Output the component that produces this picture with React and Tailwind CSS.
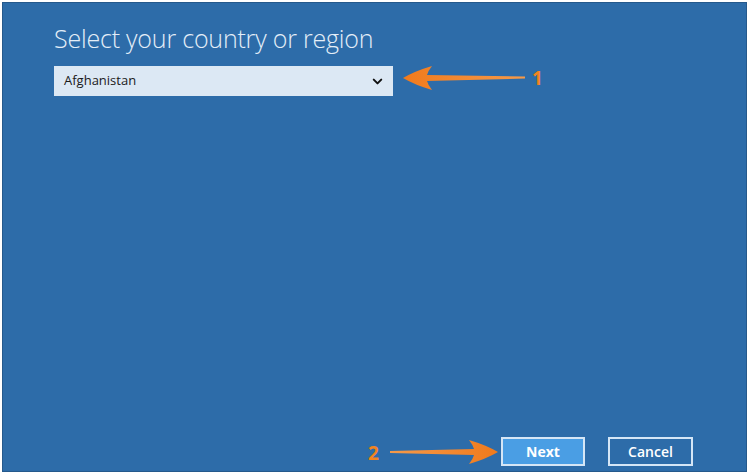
import { ChevronDown } from "lucide-react";

// ── Annotation arrows ────────────────────────────────────────────────────────
const ArrowLeft = () => (
  <svg width="126" height="26" viewBox="0 0 126 26" className="absolute left-[401px] top-[65px]">
    <defs>
      <linearGradient id="a1" x1="0" x2="1" y1="0" y2="0">
        <stop offset="0" stopColor="#f07a1c" />
        <stop offset="1" stopColor="#f59a4a" />
      </linearGradient>
    </defs>
    <path d="M2 13 Q14 6 31 1 Q27 6 26 10 L124 11.5 L124 13.5 L26 16 Q27 20 31 25 Q14 20 2 13 Z" fill="url(#a1)" />
  </svg>
);

const ArrowRight = () => (
  <svg width="112" height="26" viewBox="0 0 112 26" className="absolute left-[388px] top-[439px]">
    <defs>
      <linearGradient id="a2" x1="0" x2="1" y1="0" y2="0">
        <stop offset="0" stopColor="#f59a4a" />
        <stop offset="1" stopColor="#f07a1c" />
      </linearGradient>
    </defs>
    <path d="M110 13 Q98 6 81 1 Q85 6 86 10 L2 12 L2 14 L86 16 Q85 20 81 25 Q98 20 110 13 Z" fill="url(#a2)" />
  </svg>
);

export default function App() {
  return (
    <div className="relative w-[750px] h-[475px] bg-white pl-[2px] pt-[2px]"
         style={{ fontFamily: '"Open Sans", "Noto Sans", sans-serif' }}>
      <div className="w-[745px] h-[470px] bg-[#2d6ca9] border border-[#25598c] flex flex-col justify-between">

        {/* Top */}
        <div className="pl-[51px] pt-[19px]">
          <h1 className="text-[25px] leading-[33px] font-light text-[#e4eef8] tracking-[-0.2px]">
            Select your country or region
          </h1>
          <div className="mt-[11px] w-[339px] h-[30px] bg-[#dce8f4] flex items-center justify-between pl-[10px] pr-[8px]">
            <span className="text-[13px] text-[#1a1a1a]">Afghanistan</span>
            <ChevronDown size={15} strokeWidth={3.2} className="text-[#111]" />
          </div>
        </div>

        {/* Bottom buttons */}
        <div className="flex justify-end gap-[23px] pr-[53px] pb-[5px]">
          <button className="w-[84px] h-[29px] bg-[#4a9ee4] border-2 border-[#d5e6f6] text-white text-[14px] font-bold">
            Next
          </button>
          <button className="w-[85px] h-[29px] bg-[#2d6ca9] border-2 border-[#d5e6f6] text-white text-[14px] font-semibold">
            Cancel
          </button>
        </div>
      </div>

      {/* Annotations */}
      <ArrowLeft />
      <span className="absolute left-[532px] top-[64px] text-[19px] font-bold text-[#f2841f]">1</span>
      <ArrowRight />
      <span className="absolute left-[368px] top-[439px] text-[19px] font-bold text-[#f2841f]">2</span>
    </div>
  );
}
